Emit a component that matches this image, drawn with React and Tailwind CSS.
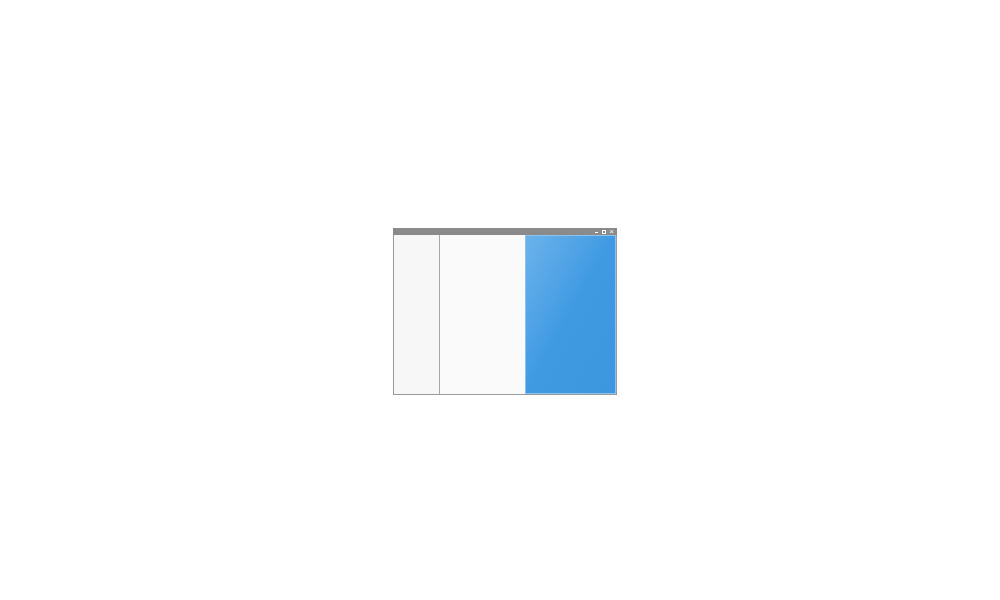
export default function App() {
    return (
        <div className="w-[1000px] h-[600px] bg-white pt-[228px] pl-[393px]" style={{ fontFamily: '"Liberation Sans", sans-serif' }}>
            <div className="w-[224px] flex flex-col">
                {/* title bar */}
                <div className="h-[7px] bg-[#8a8a8a] flex items-center justify-end gap-[2px] pr-[3px]">
                    <span className="w-[3px] h-[1px] bg-white mt-[2px]"></span>
                    <span className="w-[4px] h-[4px] border border-white ml-[2px]"></span>
                    <span className="text-white text-[8px] leading-none ml-[1px]">×</span>
                </div>
                <div className="h-[160px] flex border-l border-r border-b border-[#9a9a9a]">
                    <div className="w-[46px] bg-[#f7f7f7] border-r border-[#a8a8a8]"></div>
                    <div className="w-[85px] bg-[#fafafa]"></div>
                    <div className="flex-1 bg-gradient-to-br from-[#6cb2ea] via-[#3f9ae2] to-[#3d97df] border border-[#8cc3ee]"></div>
                </div>
            </div>
        </div>
    );
}
